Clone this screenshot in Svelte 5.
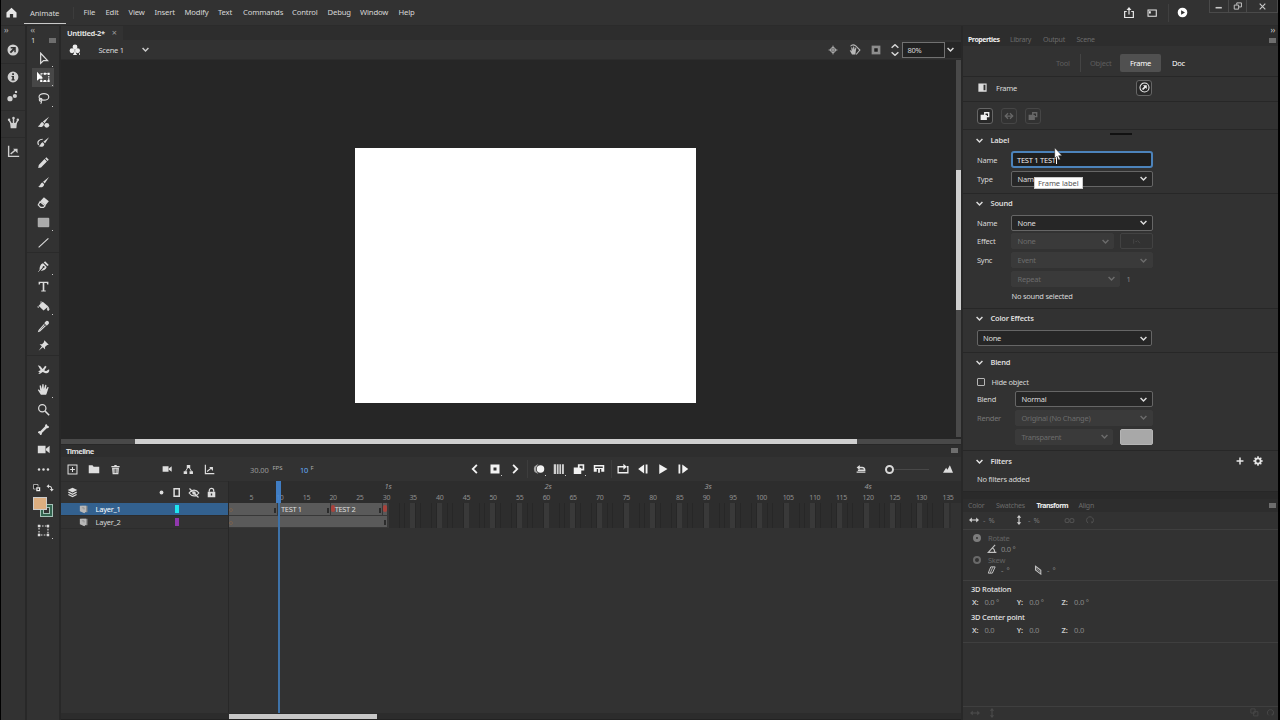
<script>
  const icons = {
    home: '<path d="M8 2.2 14.2 8v6H10v-4.2H6V14H1.8V8z"/>',
    share: '<g fill="none" stroke="currentColor" stroke-width="1.6"><path d="M5 6H2.2v8h11.6V6H11M8 10V3"/></g><path d="M8 0 11.3 4H4.7z"/>',
    layout: '<path d="M2 3.2h12.4v9.8H2zM3.4 4.600v7h9.600v-7z" fill-rule="evenodd"/><path d="M4 5.5h2.4v3.300H4z"/>',
    playc: '<path fill-rule="evenodd" d="M8 1a7 7 0 1 1 0 14A7 7 0 0 1 8 1zM6 4.600v6.800L11.600 8z"/>',
    min: '<path d="M2.500 9.500h10v2.500h-10z"/>',
    restore: '<g fill="none" stroke="currentColor" stroke-width="1.5"><path d="M2 6.500h7v6.500H2zM6 6V3h7.500v6.500H9.500"/></g>',
    close: '<path d="m3 3 10 10m0-10-10 10" fill="none" stroke="currentColor" stroke-width="2"/>',
    circarrow: '<path fill-rule="evenodd" d="M8 .6a7.400 7.400 0 1 1 0 14.800A7.400 7.400 0 0 1 8 .6zM4.900 4v2h3L3.600 10.500 5.400 12.300l4.300-4.300v3h2V4z"/>',
    ringarrow: '<circle cx="8" cy="8" r="6.600" fill="none" stroke="currentColor" stroke-width="1.500"/><path d="M5.800 4.700h5.500v5.500L9.500 8.400 6 11.800 4.300 10.100l3.400-3.500z"/>',
    info: '<path fill-rule="evenodd" d="M8 .8a7.200 7.200 0 1 1 0 14.400A7.200 7.200 0 0 1 8 .8zM6.900 3v2.200h2.400V3zM6 6.500V8h1v3H6v1.500h4.200V11h-.9V6.500z"/>',
    dots3: '<circle cx="4" cy="11.500" r="3.500"/><circle cx="10.500" cy="8" r="2.800"/><circle cx="12" cy="2.500" r="1.600"/>',
    pot: '<path d="M3.800 8.500h8.400l-.7 6.500h-7z"/><path d="M5 9 2.500 5M8 9V2M11 9l2.500-4" fill="none" stroke="currentColor" stroke-width="1.800"/><circle cx="2.500" cy="4.500" r="1.500"/><circle cx="8" cy="2.500" r="1.500"/><circle cx="13.300" cy="4.500" r="1.500"/>',
    chart: '<path d="M2 1v13h13M4.500 11l6-5" fill="none" stroke="currentColor" stroke-width="1.700"/><path d="M7.500 4.500H13V10z"/>',
    select: '<path d="m4.500 1.500 8.500 9H8L4.500 14z" fill="none" stroke="currentColor" stroke-width="1.500"/>',
    freetrans: '<path d="M0 1v11l3-2.500L7.500 9z"/><path d="M5 3.500h9.500v9H5z" fill="none" stroke="currentColor" stroke-width="1.300" stroke-dasharray="2 1"/><path d="M13 2h2.500v2.500H13zM13 11h2.500v2.500H13zM4 11h2.500v2.500H4zM8.500 2H11v2.500H8.500zM8.500 11H11v2.500H8.500z"/>',
    lasso: '<g fill="none" stroke="currentColor" stroke-width="1.400"><ellipse cx="8.500" cy="6" rx="6" ry="4"/><circle cx="4.500" cy="9.500" r="1.700"/><path d="M5 11c.8 1.200.5 2.600-.5 3.500"/></g>',
    fluid: '<path d="M14.800 1 7.300 6.800l2 2zM6.600 7.500C4 8 4.500 11 1 13c3.500 1.500 7.500.2 7.600-3.500z"/><circle cx="12" cy="11.500" r="3"/>',
    artbrush: '<path d="M14.800 1.500 7.800 7l2.200 2zM7 7.700c-2.500.6-2 3.300-5 5 3.500 1.400 7 .3 7-3z"/><path d="M2 11C-.5 7 3 4 7 4" fill="none" stroke="currentColor" stroke-width="1.500"/>',
    pencil: '<path d="M11.500 1.500 14.500 4.500 13 6 10 3zM9.200 3.800l3 3L5 14l-3.500.8L2.200 11z"/>',
    brush: '<path d="m14.800 1.200-7.300 6 2 2zM6.700 8c-2.600.6-2 3.500-5.200 5.300 3.600 1.500 7.300.2 7.300-3.300z"/>',
    eraser: '<path d="m8.500 1.500 6 5-4 5-6.500-5z"/><path d="M3.800 7 10 12l-2 2H4.500L1.500 11z" fill="none" stroke="currentColor" stroke-width="1.400"/>',
    rect: '<path d="M1.500 2.800h13v10.400h-13z" fill="#aaa" stroke="#c4c4c4"/>',
    line: '<path d="M2 14 14 3" stroke="currentColor" stroke-width="1.400"/>',
    pen: '<path fill-rule="evenodd" d="m10 1.500 4.500 4.500-1.700 1.500L8.300 3zM7.500 4l4.400 4.500c-.5 3-3.500 4.500-7.400 5L8 9.800a1.200 1.200 0 1 0-1-1L3.200 12.500C3 8.500 4.500 4.500 7.500 4z"/><path d="m1.500 14.500 5-5" stroke="currentColor" stroke-width=".8"/>',
    text: '<path d="M2 2h12v3.500h-1.500L12 3.800H9v9h1.800v1.400H5.200v-1.400H7v-9H4l-.5 1.700H2z"/>',
    bucket: '<path d="m7 2 7 6-6 5-6-6z"/><path d="M5 6V1.500M13.500 8.500c1 2 1.800 3 .8 4.200-1.600.6-2-.8-.8-4.200z" stroke="currentColor"/><path d="M1 7.500c-1 2 .5 3 1.500 1z"/>',
    dropper: '<path d="m10 2.500 2-1.500c2 0 3.200 1.500 2.500 3.500L12 7 9 4z"/><path d="m9 5.500-6.500 7L2 14l1.500-.5 7-6.500" fill="none" stroke="currentColor" stroke-width="1.300"/>',
    pin: '<path d="m9 1.500 5.500 5.500-2 .5-2.700 2.300.2 3L7.200 10 2 14.500l4-5.500-2.800-2.500 3 0L8.500 4z"/>',
    warp: '<path d="M1 3.500c3-1.500 4 2.500 6 4l3-4 1.800 1.200L9 9c1 .8 2 1 3 .5 1-.6 2-1.500 3-1.500.6 3-1.500 4.800-4 4.500-2-.2-3-1.300-4-1.500-1.500.6-3 3-5.500 2.500 1.200-.8 1-2 2-2.500-1-.3-2 0-2.500-1 1.500-.2 2.500-.5 3.500-1.500C3 7.500 3 5 1 3.500z"/>',
    hand: '<path d="M4.800 14.500 1 8.500c.8-.9 1.700-.4 3 1.200L3.200 3.500c.5-1 1.500-.8 1.800.3l.9 3.700L6.500 2c.6-1 1.600-.7 1.700.3l.3 5.200L10 2.700c.7-.9 1.700-.3 1.600.6l-.7 4.700 2-2.900c.9-.6 1.600 0 1.200 1L12 12.500l-.8 2z"/>',
    zoom: '<circle cx="6.500" cy="6.500" r="4.500" fill="none" stroke="currentColor" stroke-width="1.500"/><path d="m10 10 5 5" stroke="currentColor" stroke-width="1.800"/>',
    bone: '<path d="m4 10 6-6c-.5-2 1-3 2.200-2.200l.6 1.500 1.700.7c.8 1.500-.6 2.800-2.500 2.400l-6 6c.5 1.800-1 3-2.300 2.200L3 13l-1.600-.6C.7 11 2 9.600 4 10z"/>',
    camera: '<path d="M1 3.500h9.500v9H1zM11 7l4.500-3.500v9L11 9z"/>',
    more: '<circle cx="2.500" cy="8" r="1.500"/><circle cx="8" cy="8" r="1.500"/><circle cx="13.500" cy="8" r="1.500"/>',
    bounds: '<path d="M2.500 2.500h11v11h-11z" fill="none" stroke="currentColor" stroke-width="1.400" stroke-dasharray="2 1.600"/><path d="M1 1h3v3H1zM12 1h3v3h-3zM1 12h3v3H1zM12 12h3v3h-3z"/>',
    bw: '<path d="M1 1h9v9H1z" fill="#222" stroke="#ccc" stroke-width="1.500"/><path d="M6 6h9v9H6z" fill="#eee" stroke="#222" stroke-width="1"/><path d="M9 9h3v3H9z" fill="#222"/>',
    swap: '<path d="M5 4.500c4-.5 6.500 1.500 6.500 6" fill="none" stroke="currentColor" stroke-width="2.200"/><path d="m1 4.500 5-4v8zM7.500 10h8l-4 5z"/>',
    club: '<circle cx="8" cy="4" r="3.200"/><circle cx="4" cy="9" r="3.200"/><circle cx="11.500" cy="9" r="3.200"/><path d="M7.200 5h1.600c0 5 .2 7.500 2 9.500H5.200c1.800-2 2-4.500 2-9.500z"/>',
    chev: '<path d="m2.800 5.300 5.200 5.200 5.200-5.200" fill="none" stroke="currentColor" stroke-width="2.600"/>',
    center: '<circle cx="8" cy="8" r="4" fill="none" stroke="currentColor" stroke-width="1.500"/><path d="M8 1v14M1 8h14" stroke="currentColor" stroke-width="1.500"/>',
    rotate: '<path d="M4 14 1 8.500c.8-.6 1.500-.2 2.500 1L3 5c.5-.8 1.300-.6 1.600.3l.7 2.500.2-4c.6-.8 1.400-.5 1.500.3l.4 3.700 1.200-3c.7-.5 1.300 0 1.200.6L9 10l-.5 4z"/><path d="M2 3c2-2.500 5-2 7-.5l5.500 5.500-5 6" fill="none" stroke="currentColor" stroke-width="1.500"/>',
    clip: '<path d="M1 1h14v14H1z" fill="#8c8c8c"/><path d="M4.500 4.500h7v7h-7z" fill="#222" stroke="#b0b0b0"/>',
    updown: '<path d="M3.500 5 8 1l4.500 4M3.500 11 8 15l4.500-4" fill="none" stroke="currentColor" stroke-width="2"/>',
    plusbox: '<path d="M1.500 1.500h13v13h-13zM8 4.500v7M4.500 8h7" fill="none" stroke="currentColor" stroke-width="1.500"/>',
    folder: '<path d="M1 3h5l1.500 2H15v8.500H1z"/>',
    trash: '<path d="M2 3h4l.5-1.500h3L10 3h4v1.800H2z"/><path fill-rule="evenodd" d="M3 5.500h10L12.200 15H3.800zM5.500 7v6h.9V7zM7.600 7v6h.9V7zM9.700 7v6h.9V7z"/>',
    tree: '<path d="M5.500 1.500h5v4.200h-5zM1 10.500h5v4H1zM9.500 10.500h5v4h-5z"/><path d="M7 5 3.500 11M9 5l3.500 6" stroke="currentColor" stroke-width="1.400"/>',
    layers: '<path d="m8 1 7 3.500L8 8 1 4.500z"/><path d="m2 7.500 6 3 6-3M2 11l6 3 6-3" fill="none" stroke="currentColor" stroke-width="1.800"/>',
    dot: '<circle cx="8" cy="8" r="2.800"/>',
    outline: '<path d="M4.500 2.500h7.500v11H4.500z" fill="none" stroke="currentColor" stroke-width="2.200"/>',
    eyeoff: '<path d="M1.500 8C5 3 11 3 14.500 8 11 13 5 13 1.500 8zM2 2l12 12" fill="none" stroke="currentColor" stroke-width="1.600"/><circle cx="8" cy="8" r="2.300"/>',
    lock: '<path fill-rule="evenodd" d="M2.500 7h11v8h-11zM7 9.500v3h2v-3z"/><path d="M4.800 7V5c0-4 6.400-4 6.400 0v2" fill="none" stroke="currentColor" stroke-width="1.800"/>',
    layer: '<path d="M4 1.500h11V13h-3z" fill="#8d8d8d"/><path d="M1.500 1.500h11v10l-3 3L1.500 11z" fill="#b8b8b8"/><path d="M5 5h4v3" fill="none" stroke="#777"/>',
    prev: '<path d="m10.500 2.500-5.500 5.500 5.500 5.500" fill="none" stroke="currentColor" stroke-width="2.400"/>',
    next: '<path d="m5.500 2.500 5.500 5.500-5.500 5.500" fill="none" stroke="currentColor" stroke-width="2.400"/>',
    keyframe: '<path fill-rule="evenodd" d="M2 2h12v12H2zM6 6v4h4V6z"/>',
    onion: '<circle cx="10" cy="8" r="5"/><path d="M5 3.200a5.200 5.200 0 0 0 0 9.600A8 8 0 0 1 5 3.200z" fill="#aaa" stroke="#aaa" stroke-width="1.500"/>',
    multi: '<path d="M1 1.500h3v13H1zM5 1.500h2.500v13H5zM8.500 1.500h2.300v13H8.500zM12 1.500h2.500v13H12z" fill="#d0d0d0"/>',
    tween: '<path fill-rule="evenodd" d="M6.500 1.500H15V10h-4v4.500H1V6h5.500zM8.800 3.800v2.500H11v1.500h1.800v-4z"/>',
    insertf: '<path fill-rule="evenodd" d="M1 2.500h14v9h-4V8H5v3.500H1zM3 4.500v2h10v-2z"/><path d="M6.800 7h2.400v6H6.800z"/>',
    loop: '<path d="M4 5H1.500v8h13V5H13M4 5h6" fill="none" stroke="currentColor" stroke-width="1.700"/><path d="M8.500 1v8L13 5z"/>',
    back: '<path d="M9.500 2v12L1.500 8zM11.500 2H14v12h-2.500z"/>',
    play: '<path d="M3 1.500v13L14 8z"/>',
    fwd: '<path d="M2 2h2.400v12H2zM7 2v12l8-6z"/>',
    undo: '<path d="M1 13h14M4 5.500h6c3 0 4 1.500 4 4.500H3" fill="none" stroke="currentColor" stroke-width="2.200"/><path d="M6 1.500v8L1 5.500z"/>',
    hills: '<path d="m0 14 5-8 2 3 4-7 5 12z"/>',
    frame: '<path fill-rule="evenodd" d="M2 2h12v12H2zM9.500 4v8h2.800V4z"/>',
    tweenmotion: '<path d="M6.500 3.500 2 8l4.500 4.500M9.500 3.500 14 8l-4.500 4.500M4 8h8" fill="none" stroke="currentColor" stroke-width="2"/>',
    plus: '<path d="M8 2.500v11M2.500 8h11" stroke="currentColor" stroke-width="2.400"/>',
    gear: '<circle cx="8" cy="8" r="4.300" fill="none" stroke="currentColor" stroke-width="3"/><path d="M8 .5v3M8 12.500v3M.5 8h3M12.500 8h3M2.700 2.700l2 2M11.300 11.300l2 2M13.300 2.700l-2 2M4.700 11.300l-2 2" stroke="currentColor" stroke-width="2.400"/>',
    harrow: '<path d="M3 8h10" stroke="currentColor" stroke-width="1.800"/><path d="m0 8 4.500-4v8zM16 8l-4.500-4v8z"/>',
    varrow: '<path d="M8 3v10" stroke="currentColor" stroke-width="1.800"/><path d="m8 0 3.500 4.500h-7zM8 16l3.500-4.500h-7z"/>',
    link: '<g fill="none" stroke="currentColor" stroke-width="1.500"><circle cx="4.500" cy="8" r="3"/><circle cx="11.500" cy="8" r="3"/></g>',
    reset: '<path d="M5 13A5.500 5.500 0 1 1 11 13V10" fill="none" stroke="currentColor" stroke-width="1.600"/>',
    angle: '<path d="M13 1.500 2 13.500h13M9 6.500c2.500 1.500 3.500 4 3.500 7" fill="none" stroke="currentColor" stroke-width="1.900"/>',
    skewh: '<path d="M6 3h7l-4.500 10H2z" fill="none" stroke="currentColor" stroke-width="1.600"/><path d="M9.500 3 5 13" stroke="currentColor" stroke-width="1.300"/>',
    skewv: '<path d="M4 2 12.500 8.500v6L4 8z" fill="none" stroke="currentColor" stroke-width="1.700"/><path d="m4 5 8.500 6.500" stroke="currentColor" stroke-width="1"/>',
    copy: '<path d="M1.500 1.500H9V9H1.500zM6.500 6.500H14V14H6.500z" fill="none" stroke="currentColor" stroke-width="1.500"/>',
    wave: '<path d="M3 4v8M6 8h3M10 6l4 5" stroke="currentColor" stroke-width="1.500"/>'
  };

  const menus = ['File', 'Edit', 'View', 'Insert', 'Modify', 'Text', 'Commands', 'Control', 'Debug', 'Window', 'Help'];
  const toolGroups = [
    [['select', 1], ['freetrans', 1], ['lasso', 1]],
    [['fluid', 0], ['artbrush', 0], ['pencil', 0], ['brush', 0], ['eraser', 0], ['rect', 1], ['line', 0]],
    [['pen', 1], ['text', 0], ['bucket', 1], ['dropper', 0], ['pin', 0]],
    [['warp', 0], ['hand', 1], ['zoom', 0], ['bone', 0], ['camera', 0], ['more', 0]]
  ];
  const playback = [['prev'], ['keyframe', 1], ['next'], ['|'], ['onion', 1], ['multi', 1], ['tween', 1], ['insertf'], ['|'], ['loop'], ['back'], ['play'], ['fwd']];
  const marks = Array.from({ length: 27 }, (_, i) => (i + 1) * 5);
</script>

{#snippet ic(name, size = 12)}
  <svg class="ic" width={size} height={size} viewBox="0 0 16 16" fill="currentColor">{@html icons[name]}</svg>
{/snippet}

{#snippet dd(value, cls = '')}
  <div class="dd {cls}"><span>{value}</span>{@render ic('chev', 9)}</div>
{/snippet}

{#snippet head(title)}
  <div class="head">{@render ic('chev', 9)}<b>{title}</b></div>
{/snippet}

<div class="app">
  <header class="top">
    <div class="home">{@render ic('home', 13)}</div>
    <div class="brand">Animate</div>
    <i class="tsep"></i>
    <nav class="menu">{#each menus as m}<span>{m}</span>{/each}</nav>
    <div class="actions">
      {@render ic('share', 12)}{@render ic('layout', 12)}<i></i>{@render ic('playc', 11)}
    </div>
    <div class="win"><span>{@render ic('min', 10)}</span><span>{@render ic('restore', 10)}</span><span>{@render ic('close', 9)}</span></div>
  </header>

  <div class="body">
    <aside class="rail">
      <div class="grip">››</div>
      <div class="r1">{@render ic('circarrow', 12)}</div>
      <div class="r2">{@render ic('info', 12)}{@render ic('dots3', 12)}</div>
      <div class="r3">{@render ic('pot', 13)}</div>
      <div class="r4">{@render ic('chart', 13)}</div>
    </aside>

    <aside class="tools">
      <div class="grip">‹‹</div>
      <div class="cols"><span>1</span><i class="burger"></i></div>
      {#each toolGroups as g}
        <div class="group">
          {#each g as [name, more]}
            <div class="tool" class:on={name === 'freetrans'}>{@render ic(name, 13)}{#if more}<i class="corner"></i>{/if}</div>
          {/each}
        </div>
      {/each}
      <div class="mini">{@render ic('bw', 8)}{@render ic('swap', 8)}</div>
      <div class="swatches"><i class="stroke"></i><i class="fill"></i></div>
      <div class="tool last">{@render ic('bounds', 13)}<i class="corner"></i></div>
    </aside>

    <main class="doc">
      <div class="tabs"><b>Untitled-2*</b><span>×</span></div>
      <div class="scene">
        <div class="club">{@render ic('club', 12)}<i class="corner"></i></div>
        <span class="sname">Scene 1</span>
        <div class="sdrop">{@render ic('chev', 9)}</div>
        <div class="view">{@render ic('center', 10)}{@render ic('rotate', 12)}{@render ic('clip', 10)}{@render ic('updown', 12)}</div>
        <div class="zoom">80%</div>
        <div class="zd">{@render ic('chev', 9)}</div>
      </div>
      <div class="stagewrap">
        <div class="stage"><div class="paper"></div></div>
        <div class="vbar"><i></i></div>
      </div>
      <div class="hbar"><i></i></div>

      <section class="timeline">
        <div class="thead"><b>Timeline</b><i class="burger"></i></div>
        <div class="tctl">
          <div class="lt">
            {@render ic('plusbox', 11)}{@render ic('folder', 12)}{@render ic('trash', 11)}{@render ic('camera', 10)}{@render ic('tree', 11)}{@render ic('chart', 11)}
          </div>
          <div class="fps"><span class="rate">30.00</span><sup>FPS</sup><span class="cur">10</span><sup class="f">F</sup></div>
          <div class="play">
            {#each playback as [n, m]}
              {#if n === '|'}<i class="vs"></i>{:else}<div class="pb">{@render ic(n, 12)}{#if m}<i class="corner"></i>{/if}</div>{/if}
            {/each}
          </div>
          <div class="tright">{@render ic('undo', 10)}<div class="slider"><i></i></div>{@render ic('hills', 10)}</div>
        </div>
        <div class="tbody">
          <div class="lcol">
            <div class="lhead">{@render ic('layers', 11)}<div class="lh">{@render ic('dot', 11)}{@render ic('outline', 11)}{@render ic('eyeoff', 12)}{@render ic('lock', 11)}</div></div>
            <div class="layer sel">{@render ic('layer', 9)}<span>Layer_1</span><i class="cyan"></i></div>
            <div class="layer">{@render ic('layer', 9)}<span>Layer_2</span><i class="violet"></i></div>
          </div>
          <div class="fcol">
            <div class="secs">{#each [1, 2, 3, 4] as s}<span>{s}s</span>{/each}</div>
            <div class="nums">{#each marks as n}<span>{n}</span>{/each}</div>
            <div class="frames">
              <div class="frow">
                <div class="span w9"><i class="hole"></i><i class="end"></i></div>
                <div class="span w10"><em>TEST 1</em><i class="end"></i></div>
                <div class="span w10"><i class="flag"></i><em>TEST 2</em><i class="end"></i></div>
                <div class="span w1"><i class="flag"></i></div>
              </div>
              <div class="frow"><div class="span w30"><i class="hole"></i><i class="end"></i></div></div>
            </div>
            <div class="playhead"></div>
          </div>
        </div>
        <div class="tscroll"><i></i></div>
      </section>
    </main>

    <aside class="props">
      <div class="pgrip">››</div>
      <div class="ptabs"><b>Properties</b><span>Library</span><span>Output</span><span>Scene</span><i class="burger"></i></div>
      <div class="modes"><span class="dim">Tool</span><i></i><span class="dim">Object</span><span class="active">Frame</span><span class="white">Doc</span></div>
      <div class="pframe">{@render ic('frame', 11)}<span>Frame</span><div class="sq">{@render ic('ringarrow', 11)}</div></div>
      <div class="quick"><div class="sq">{@render ic('tween', 10)}</div><div class="sq off">{@render ic('tweenmotion', 10)}</div><div class="sq off">{@render ic('tween', 10)}</div></div>

      <section class="s label">
        {@render head('Label')}
        <div class="row"><span class="lb">Name</span><div class="field">TEST 1 TEST<i></i></div></div>
        <div class="row"><span class="lb">Type</span>{@render dd('Name')}</div>
        <div class="tip">Frame label</div>
        <i class="handle"></i>
        <svg class="cursor" width="9" height="14" viewBox="0 0 9 14"><path d="M.7.8v10.500l2.300-2 1.600 3.800 1.700-.8L4.700 8.700h3.300z" fill="#fff" stroke="#222" stroke-width=".5" /></svg>
      </section>

      <section class="s sound">
        {@render head('Sound')}
        <div class="row"><span class="lb">Name</span>{@render dd('None')}</div>
        <div class="row"><span class="lb">Effect</span>{@render dd('None', 'off w102')}<div class="editb">{@render ic('wave', 9)}</div></div>
        <div class="row"><span class="lb">Sync</span>{@render dd('Event', 'off')}</div>
        <div class="row"><span class="lb"></span>{@render dd('Repeat', 'off w108')}<span class="one">1</span></div>
        <div class="note">No sound selected</div>
      </section>

      <section class="s color">
        {@render head('Color Effects')}
        <div class="row">{@render dd('None', 'w176')}</div>
      </section>

      <section class="s blend">
        {@render head('Blend')}
        <div class="check"><i></i>Hide object</div>
        <div class="row"><span class="lb">Blend</span>{@render dd('Normal')}</div>
        <div class="row"><span class="lb dim2">Render</span>{@render dd('Original (No Change)', 'off')}</div>
        <div class="row"><span class="lb"></span>{@render dd('Transparent', 'off w98')}<i class="bgsw"></i></div>
      </section>

      <section class="s filters">
        <div class="fh">{@render head('Filters')}{@render ic('plus', 10)}{@render ic('gear', 10)}</div>
        <div class="nof">No filters added</div>
      </section>

      <div class="xtabs"><span>Color</span><span>Swatches</span><b>Transform</b><span>Align</span><i class="burger"></i></div>
      <div class="xscale">{@render ic('harrow', 10)}<span>- &nbsp;%</span>{@render ic('varrow', 10)}<span>- &nbsp;%</span><em>{@render ic('link', 11)}</em><em>{@render ic('reset', 10)}</em></div>
      <div class="xrot">
        <div class="rad"><i class="full"></i>Rotate</div>
        <div class="val">{@render ic('angle', 10)}<span>0.0 °</span></div>
        <div class="rad"><i></i>Skew</div>
        <div class="val">{@render ic('skewh', 10)}<span>- &nbsp;°</span>{@render ic('skewv', 10)}<span>- &nbsp;°</span></div>
      </div>
      <div class="x3d">
        <h4>3D Rotation</h4>
        <div class="xyz"><b>X:</b><span>0.0 °</span><b>Y:</b><span>0.0 °</span><b>Z:</b><span>0.0 °</span></div>
        <h4>3D Center point</h4>
        <div class="xyz"><b>X:</b><span>0.0</span><b>Y:</b><span>0.0</span><b>Z:</b><span>0.0</span></div>
      </div>
      <div class="xempty"></div>
      <div class="xfoot">{@render ic('harrow', 10)}{@render ic('varrow', 10)}<em></em>{@render ic('copy', 9)}{@render ic('reset', 9)}</div>
    </aside>
  </div>
</div>

<style>
  :global(body) { background: #000; overflow: hidden; }
  .app, .app * { box-sizing: border-box; }
  .app { width: 1280px; height: 720px; display: flex; flex-direction: column; padding: 0 2px 0 1px; background: #000; color: #d8d8d8; font: 7.5px/10px "Noto Sans", sans-serif; letter-spacing: -.25px; white-space: nowrap; overflow: hidden; }
  .ic { display: block; flex: none; }
  i, em { font-style: normal; display: block; }
  i { flex: none; }
  b { font-weight: 700; }
  .burger { width: 7px; height: 5px; background: #6e6e6e; }
  .corner { position: absolute; right: 1px; bottom: 1px; width: 1.5px; height: 1.5px; background: #c8c8c8; }

  .top { height: 25px; flex: none; display: flex; align-items: center; background: #323232; }
  .home { width: 23px; padding-left: 4px; color: #e6e6e6; }
  .brand { width: 42px; height: 24px; padding-left: 6px; line-height: 26px; border-bottom: 1px solid #c9c9c9; align-self: flex-start; }
  .tsep { width: 1px; height: 12px; background: #3c3c3c; margin-left: 7px; }
  .menu { display: grid; grid-template-columns: 22px 23px 26px 30px 33.5px 25px 49px 35.5px 32.5px 38.5px 20px; margin-left: 9.5px; flex: 1; line-height: 13px; }
  .menu, .brand { font-size: 7.7px; letter-spacing: -.15px; }
  .actions { display: grid; grid-template-columns: 23px 21.5px 9px 32.5px; align-items: center; color: #e8e8e8; height: 25px; }
  .actions i { width: 1px; height: 18px; background: #404040; }
  .actions .ic:last-child { color: #fff; }
  .win { align-self: flex-start; display: grid; grid-template-columns: 19px 18px 30px; height: 13px; border: 1px solid #4a4a4a; border-top: 0; color: #c9c9c9; }
  .win span { display: grid; place-items: center; border-right: 1px solid #4a4a4a; }
  .win span:last-child { border: 0; }

  .body { flex: 1; display: flex; background: #282828; min-height: 0; border-top: 1px solid #2b2b2b; }
  .rail { width: 24px; background: #323232; color: #d0d0d0; }
  .grip { height: 11px; line-height: 8px; font-size: 8px; padding-left: 3px; color: #bbb; letter-spacing: -.5px; }
  .rail > div:not(.grip) { display: flex; flex-direction: column; align-items: center; border-bottom: 1px solid #2b2b2b; }
  .r1 { height: 27px; padding-top: 7px; }
  .r2 { height: 47px; padding-top: 7px; gap: 7px; }
  .r3 { height: 27px; padding-top: 5px; }
  .rail > .r4:not(.grip) { padding-top: 7px; height: 28px; border: 0; }

  .tools { width: 32px; margin-left: 2px; background: #323232; color: #dcdcdc; }
  .tools .grip { padding-left: 3.5px; }
  .cols { height: 12px; display: flex; padding: 0 3px 0 4px; justify-content: space-between; line-height: 6px; }
  .cols .burger { margin-top: 1px; }
  .group { margin-bottom: 3px; border-bottom: 1px solid #2a2a2a; }
  .group:nth-of-type(3) { border-color: #323232; }
  .group:nth-of-type(6) { border: 0; margin: 0; }
  .tool { height: 20px; width: 22px; margin-left: 5px; display: grid; place-items: center; position: relative; }
  .group:nth-of-type(3) .tool:first-child { height: 19px; }
  .group:nth-of-type(5) .tool:last-child { height: 19px; }
  .tool.on { background: #474747; color: #fff; background-clip: padding-box; border-bottom: 1px solid #323232; }
  .mini { display: flex; gap: 5px; padding: 5px 0 0 6px; height: 18px; }
  .swatches { display: grid; height: 23px; padding-left: 6px; }
  .swatches i { grid-area: 1/1; }
  .fill { width: 14px; height: 13px; background: #dcae80; border: 1px solid #ccc; z-index: 1; }
  .stroke { width: 13px; height: 13px; margin: 7px 0 0 7px; border: 1px solid #a4c2b8; box-shadow: inset 0 0 0 2px #32644f, inset 0 0 0 3px #a4c2b8; background: #333; }

  .doc { width: 900px; margin-left: 2px; display: flex; flex-direction: column; background: #282828; }
  .tabs { height: 14px; display: flex; align-items: center; gap: 7px; background: linear-gradient(90deg, #323232 62px, #2d2d2d 62px); padding-left: 6px; color: #ddd; letter-spacing: -.35px; line-height: 12px; }
  .tabs b { padding-bottom: 1px; }
  .tabs span { font-size: 9px; color: #999; }
  .scene { height: 20px; display: flex; align-items: center; background: #323232; border-bottom: 1px solid #2c2c2c; }
  .club { position: relative; margin-left: 8px; width: 12px; color: #eee; }
  .sname { margin-left: 17.5px; width: 42.5px; }
  .sdrop { flex: 1; color: #ccc; }
  .view { display: grid; grid-template-columns: 20.5px 22.5px 17.5px 13px; align-items: center; color: #b8b8b8; }
  .view .ic:last-child { color: #d8d8d8; }
  .zoom { width: 43px; height: 16px; border: 1px solid #717171; background: #222; padding-left: 5px; line-height: 14px; }
  .zd { width: 16.5px; height: 16px; display: grid; place-items: center; background: #262626; color: #ddd; padding-right: 5px; }
  .stagewrap { height: 377px; display: flex; background: #262626; }
  .stage { flex: 1; padding: 88px 0 0 294px; }
  .paper { width: 341px; height: 255px; background: #fff; }
  .vbar { width: 5px; background: #494949; padding-top: 110px; }
  .vbar i { height: 140px; background: #cfcfcf; }
  .hbar { height: 7px; padding: 2px 0 0; display: flex; background: linear-gradient(#262626 2px, #494949 2px); }
  .hbar i { margin-left: 74px; width: 722px; height: 5px; background: #cfcfcf; }
  .timeline { flex: 1; display: flex; flex-direction: column; background: #323232; border-top: 1px solid #282828; min-height: 0; }
  .thead { height: 12px; display: flex; align-items: center; justify-content: space-between; padding: 0 3px 1px 5px; background: #2e2e2e; color: #ddd; letter-spacing: -.55px; }
  .tctl { height: 24px; display: flex; align-items: center; }
  .lt { width: 167px; display: grid; grid-template-columns: 21px 22px 51.5px 21px 21.5px 18px; align-items: center; padding-left: 6px; color: #dedede; }
  .fps { width: 237px; display: flex; align-items: center; padding-left: 22px; color: #999; }
  .rate { width: 22.5px; letter-spacing: -.1px; }
  .fps span { padding-top: 2px; }
  .fps sup { font-size: 6px; line-height: 6px; padding-bottom: 3px; letter-spacing: 0; vertical-align: baseline; color: #aaa; }
  .fps .cur { color: #64b0ff; margin-left: 17.5px; width: 10.5px; }
  .play { display: flex; align-items: center; color: #f2f2f2; height: 23px; }
  .pb { width: 20px; height: 14px; display: grid; place-items: center; position: relative; }
  .pb .corner { right: 3px; bottom: 0; }
  .vs { width: 1px; height: 18px; background: #3d3d3d; margin: 0 1.5px; }
  .tright { flex: 1; display: flex; align-items: center; justify-content: flex-end; padding-right: 8px; color: #ddd; }
  .slider { width: 48px; height: 9px; margin: 0 10px 0 19px; background: linear-gradient(#484848, #484848) no-repeat 8px 4px / 36px 1px; }
  .slider i { width: 9px; height: 9px; border: 2px solid #d8d8d8; border-radius: 50%; }
  .tbody { flex: 1; display: flex; min-height: 0; }
  .lcol { width: 167px; flex: none; }
  .lhead { height: 22px; display: flex; align-items: center; padding-left: 6px; color: #ddd; border-top: 1px solid #2d2d2d; }
  .lh { display: grid; grid-template-columns: 14.5px 17px 18px 12px; margin-left: 78px; align-items: center; }
  .layer { height: 13px; display: flex; align-items: center; padding-left: 18px; border-bottom: 1px solid #2c2c2c; }
  .layer span { width: 87px; padding-left: 7.5px; flex: none; }
  .layer.sel { background: #33618f; color: #fff; }
  .layer i { width: 4px; height: 8px; }
  .cyan { background: #1ee6f0; }
  .violet { background: #9038ad; }
  .fcol { flex: 1; min-width: 0; position: relative; border-left: 1px solid #282828; }
  .secs { height: 10px; display: flex; padding-left: 155.5px; background: #2d2d2d; font-style: italic; color: #999; line-height: 10px; }
  .secs span { width: 160px; flex: none; }
  .nums { height: 12px; display: flex; overflow: hidden; padding-left: 20.5px; background: #2d2d2d; color: #8f8f8f; font-size: 7px; line-height: 13px; }
  .nums span { width: 26.67px; flex: none; letter-spacing: -.35px; }
  .frames { height: 25px; background: repeating-linear-gradient(90deg, transparent 0 21.34px, #393939 21.34px 26.17px, transparent 26.17px 26.67px), repeating-linear-gradient(90deg, #2d2d2d 0 4.534px, #272727 4.534px 5.334px); width: 722px; }
  .frow { height: 12.5px; display: flex; }
  .span { height: 12.5px; background: #5a5a5a; border-right: 1px solid #383838; border-bottom: 1px solid #383838; display: flex; align-items: center; color: #ddd; }
  .span em { flex: 1; padding-left: 3px; letter-spacing: -.35px; }
  .w9 { width: 49px; } .w10 { width: 52.7px; } .w1 { width: 5px; } .w30 { width: 159px; }
  .hole { width: 4px; height: 4px; border: 1px solid #77604f; border-radius: 50%; margin-top: 3px; }
  .span .end { width: 2px; height: 5px; border: 1px solid #2c2c2c; margin: 3px 1px 0 auto; }
  .flag { width: 4px; height: 7px; background: #a8433c; border-radius: 2px; }
  .span .flag + em { padding-left: 0; }
  .playhead { position: absolute; left: 47px; top: 0; width: 5px; height: 22px; background: #4389d8e0; }
  .playhead::after { content: ''; position: absolute; left: 2px; top: 22px; width: 2px; height: 210px; background: #3e72a8; }
  .tscroll { height: 7px; background: #2c2c2c; padding: 1px 0 0 168px; border-bottom: 1px solid #222; }
  .tscroll i { width: 148px; height: 5px; background: #c8c8c8; }

  .props { width: 315px; margin-left: 2px; background: #323232; display: flex; flex-direction: column; }
  .pgrip { height: 8px; background: #2d2d2d; text-align: right; padding-right: 3px; line-height: 7px; font-size: 8px; }
  .ptabs { height: 12px; background: #2d2d2d; display: grid; grid-template-columns: 42px 33px 33.5px 192px 8px; padding-left: 5px; align-items: center; color: #6b6b6b; font-size: 7px; }
  .ptabs b, .xtabs b { color: #eee; letter-spacing: -.48px; }
  .modes { height: 31px; display: flex; align-items: center; border-bottom: 1px solid #272727; padding: 3px 0 0 93px; }
  .modes .dim { color: #5e5e5e; width: 24px; }
  .modes i { width: 1px; height: 18px; background: #444; margin-right: 9px; }
  .modes .dim + .active { margin-left: 6px; }
  .modes .active { width: 41px; height: 18px; line-height: 18px; text-align: center; background: #505050; color: #fff; border-radius: 2px; margin-right: 11px; }
  .white { color: #fff; }
  .pframe { height: 25px; display: flex; align-items: center; padding: 0 0 3px 14px; border-bottom: 1px solid #272727; color: #ddd; }
  .pframe span { padding-left: 8px; width: 148px; }
  .sq { width: 16px; height: 16px; border: 1px solid #666; background: #282828; border-radius: 3px; display: grid; place-items: center; color: #eee; }
  .sq.off { color: #686868; border-color: #464646; background: none; }
  .quick { height: 28px; display: flex; gap: 8px; align-items: center; padding-left: 13.5px; border-bottom: 1px solid #272727; }
  .s { position: relative; border-bottom: 1px solid #272727; padding-left: 12px; flex: none; }
  .head { display: flex; align-items: center; height: 12px; gap: 6.5px; color: #ddd; }
  .head b { font-weight: 600; letter-spacing: -.22px; }
  .row { display: flex; height: 16px; align-items: center; }
  .lb { width: 34px; padding-left: 2px; flex: none; }
  .dd { flex: none; width: 141.5px; height: 16px; border: 1px solid #666; border-radius: 2px; background: #262626; display: flex; align-items: center; justify-content: space-between; padding: 0 3.5px 0 5.5px; color: #ddd; }
  .dd.off { background: #3a3a3a; border-color: #3a3a3a; color: #6c6c6c; }
  .dd.w102 { width: 103px; } .dd.w108 { width: 109px; } .dd.w98 { width: 98px; } .dd.w176 { width: 175.5px; margin-left: 1.5px; }
  .label { height: 64px; padding-top: 4px; }
  .label .row { margin-top: 5.5px; }
  .label .row + .row { margin-top: 3px; }
  .label .dd, .field { margin-left: 2px; }
  .field { width: 142px; height: 17px; border: 2px solid #4c83bb; border-radius: 3px; background: #1e1e1e; color: #eee; padding-left: 4px; display: flex; align-items: center; }
  .field i { width: 1px; height: 9px; background: #fff; }
  .tip { position: absolute; left: 71px; top: 47px; width: 49px; height: 12px; background: #fff; border: 1px solid #ccc; color: #555; line-height: 10px; padding-left: 3px; letter-spacing: -.05px; }
  .handle { position: absolute; left: 147px; top: 3px; width: 22px; height: 2px; background: #111; }
  .cursor { position: absolute; left: 91px; top: 17px; }
  .sound { height: 115px; padding-top: 3px; }
  .sound .row { margin-top: 2.8px; }
  .sound .head + .row { margin-top: 5.5px; }
  .sound .dd { margin-left: 2px; }
  .editb { width: 33px; height: 16px; margin-left: 6px; border: 1px solid #424242; border-radius: 2px; display: grid; place-items: center; color: #4a4a4a; }
  .one { color: #888; margin-left: 6.5px; }
  .note { margin: 4px 0 0 36.5px; }
  .color { height: 44px; padding-top: 3px; }
  .color .row { margin-top: 6px; }
  .blend { height: 98px; padding-top: 3px; }
  .check { display: flex; align-items: center; height: 12px; margin: 7.5px 0 3.5px 2px; gap: 6.5px; }
  .check i { width: 8px; height: 8px; border: 1px solid #b5b5b5; border-radius: 1px; }
  .blend .row { margin-bottom: 2.9px; }
  .blend .dd { margin-left: 6px; width: 137.5px; }
  .blend .dd.w98 { width: 98px; }
  .dim2 { color: #777; }
  .bgsw { width: 33px; height: 16px; margin-left: 7px; background: #a8a8a8; border-radius: 2px; border: 1px solid #b4b4b4; }
  .filters { height: 41px; padding-top: 4px; }
  .fh { display: flex; align-items: center; }
  .fh :global(.head) { width: 260px; }
  .fh > .ic:nth-child(3) { margin-left: 7.5px; }
  .fh .ic { color: #e6e6e6; }
  .nof { margin: 7px 0 0 2px; }
  .xtabs { height: 20px; border-top: 7px solid #2a2a2a; background: #2d2d2d; display: grid; grid-template-columns: 28px 40.5px 42px 190px 8px; padding-left: 5px; align-items: center; color: #6b6b6b; font-size: 7px; }
  .xscale { height: 18px; display: flex; align-items: center; padding: 0 0 1px 6px; border-bottom: 1px solid #3f3f3f; color: #777; }
  .xscale .ic { color: #d0d0d0; }
  .xscale span { width: 35px; padding-left: 4px; }
  .xscale em { width: 21px; }
  .xscale em .ic { color: #505050; }
  .xscale span + em { margin-left: 4.5px; }
  .xrot { height: 51px; border-bottom: 1px solid #3f3f3f; padding: 2px 0 0 10px; color: #646464; }
  .rad { display: flex; gap: 7px; height: 12px; align-items: center; }
  .rad i { width: 8px; height: 8px; border-radius: 50%; border: 2px solid #696969; }
  .rad .full { border-width: 3px; border-color: #7c7c7c; }
  .val { display: flex; height: 9.5px; align-items: center; padding-left: 14px; color: #888; }
  .val .ic { color: #c0c0c0; }
  .val span { padding-left: 4px; width: 36px; }
  .x3d { height: 62px; border-bottom: 1px solid #3f3f3f; padding: 3px 0 0 8px; color: #888; }
  h4 { margin: 0; font: inherit; font-weight: 500; color: #e2e2e2; height: 10px; letter-spacing: -.2px; }
  .xyz { display: grid; grid-template-columns: 12.5px 32.3px 12.5px 32.3px 12.5px 32px; height: 10px; margin: 2.8px 0 5.7px 1px; }
  .xyz b { color: #ccc; font-weight: 600; }
  .xempty { height: 64px; border-bottom: 1px solid #3f3f3f; }
  .xfoot { flex: 1; display: flex; align-items: center; gap: 7px; padding: 0 3px 2px 7px; color: #4a4a4a; }
  .xfoot em { flex: 1; }
</style>
